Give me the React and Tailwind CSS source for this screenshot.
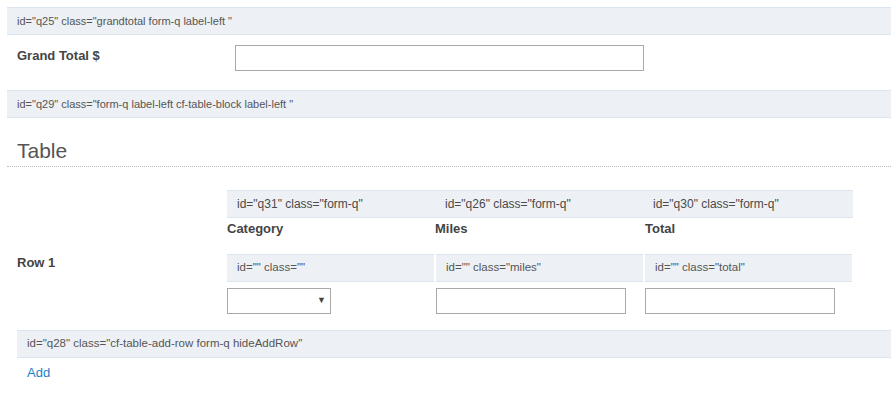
import React from 'react';

function InfoBar({ children, className = '', textSize = 'text-[11px]' }) {
  return (
    <div
      className={`h-[28px] flex items-center bg-[#edf1f5] border-y border-[#dbe5ef] pl-[10px] ${textSize} text-[#555] whitespace-nowrap ${className}`}
    >
      {children}
    </div>
  );
}

function TextBox({ className = '' }) {
  return <div className={`h-[26px] border border-[#a9a9a9] bg-white ${className}`} />;
}

export default function App() {
  const columns = [
    { q: 'id="q31" class="form-q"', label: 'Category', cell: 'id="" class=""' },
    { q: 'id="q26" class="form-q"', label: 'Miles', cell: 'id="" class="miles"' },
    { q: 'id="q30" class="form-q"', label: 'Total', cell: 'id="" class="total"' },
  ];

  return (
    <div className="pt-[7px] pl-[7px] bg-white min-h-[395px] font-['Liberation_Sans',Arial,sans-serif]">
      <InfoBar>id="q25" class="grandtotal form-q label-left "</InfoBar>

      {/* Grand total row */}
      <div className="flex items-start mt-[10px] pl-[10px]">
        <div className="w-[218px] pt-[1px] text-[13px] font-bold text-[#444]">Grand Total $</div>
        <TextBox className="w-[409px]" />
      </div>

      <InfoBar className="mt-[19px]">id="q29" class="form-q label-left cf-table-block label-left "</InfoBar>

      {/* Table heading */}
      <div className="mt-[23px] pl-[10px] pb-[5px] border-b border-dotted border-[#bbb] text-[21px] text-[#555] leading-[20px]">
        Table
      </div>

      {/* Table block */}
      <div className="flex mt-[23px] pl-[10px]">
        <div className="w-[210px] pt-[63px] text-[13px] font-bold text-[#444]">Row 1</div>
        <div className="w-[626px]">
          <div className="grid grid-cols-[208px_208px_210px] h-[28px] items-center bg-[#edf1f5] border-y border-[#dbe5ef] text-[12px] text-[#4a4a4a]">
            {columns.map((c) => (
              <div key={c.q} className="pl-[10px] whitespace-nowrap">{c.q}</div>
            ))}
          </div>
          <div className="grid grid-cols-[208px_208px_210px] h-[22px] items-center text-[13px] font-bold text-[#444]">
            {columns.map((c, i) => (
              <div key={c.label} className={i === 2 ? 'pl-[2px]' : ''}>{c.label}</div>
            ))}
          </div>
          <div className="grid grid-cols-[209px_209px_208px] mt-[14px]">
            {columns.map((c, i) => (
              <div key={c.cell}>
                <div className="w-[207px] h-[28px] flex items-center bg-[#edf1f5] border-y border-[#dbe5ef] pl-[10px] text-[11.5px] text-[#555] whitespace-nowrap">
                  {c.cell}
                </div>
                {i === 0 ? (
                  <div className="mt-[6px] w-[104px] h-[26px] border border-[#a9a9a9] flex items-center justify-end pr-[4px] text-[9px] text-[#444]">
                    ▼
                  </div>
                ) : (
                  <TextBox className="mt-[6px] w-[190px]" />
                )}
              </div>
            ))}
          </div>
        </div>
      </div>

      {/* Add row */}
      <div className="ml-[10px] mt-[16px]">
        <InfoBar textSize="text-[11.5px]">id="q28" class="cf-table-add-row form-q hideAddRow"</InfoBar>
        <div className="pl-[10px] pt-[5px] text-[13px] text-[#1a7fc8]">Add</div>
      </div>
    </div>
  );
}
